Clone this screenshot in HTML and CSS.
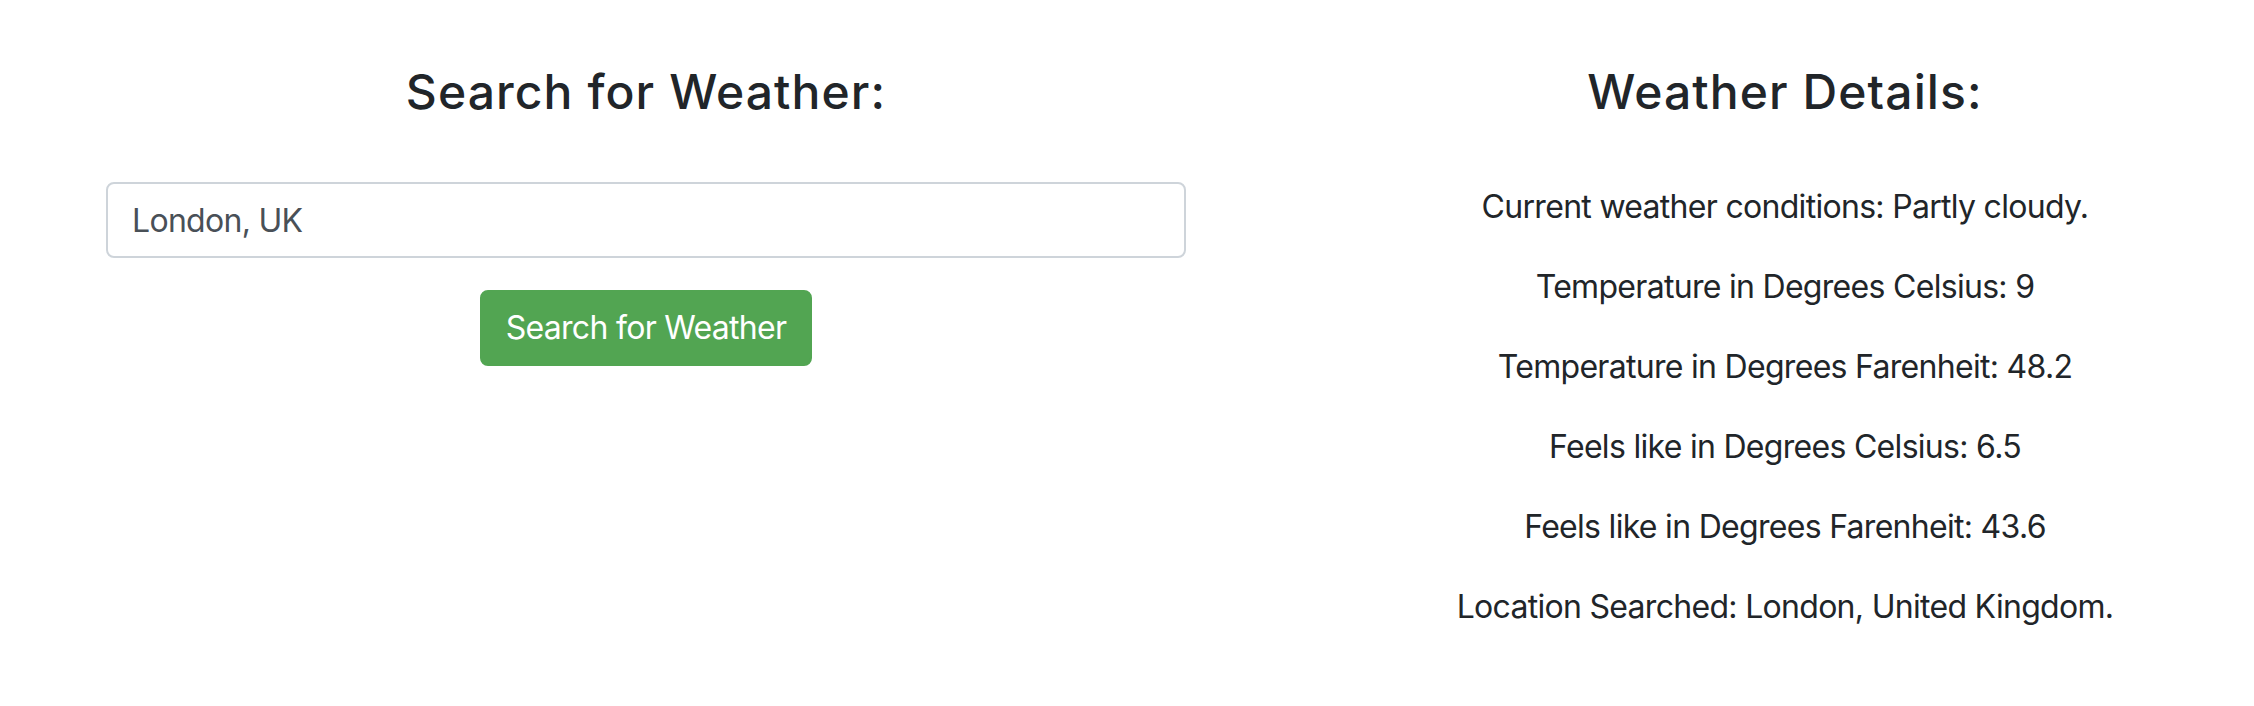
FILE: index.html
```html
<!DOCTYPE html>
<html lang="en">
<head>
<meta charset="utf-8">
<title>Weather</title>
<link rel="stylesheet" href="styles.css">
</head>
<body>
<main class="page">
  <section class="search">
    <h2 class="title">Search for Weather:</h2>
    <input class="field" type="text" value="London, UK">
    <button class="btn" type="button">Search for Weather</button>
  </section>
  <section class="details">
    <h2 class="title">Weather Details:</h2>
    <p class="line">Current weather conditions: Partly cloudy.</p>
    <p class="line">Temperature in Degrees Celsius: 9</p>
    <p class="line">Temperature in Degrees Farenheit: 48.2</p>
    <p class="line">Feels like in Degrees Celsius: 6.5</p>
    <p class="line">Feels like in Degrees Farenheit: 43.6</p>
    <p class="line">Location Searched: London, United Kingdom.</p>
  </section>
</main>
</body>
</html>
```

FILE: styles.css
```css
html, body {
  margin: 0;
  padding: 0;
  background: #ffffff;
}
body {
  font-family: Inter, "Liberation Sans", sans-serif;
  color: #212529;
  font-size: 32px;
  line-height: 48px;
  letter-spacing: -0.7px;
}
.page {
  display: grid;
  grid-template-columns: 1080px 938px;
  column-gap: 130px;
  padding-left: 106px;
}
.search, .details {
  display: flex;
  flex-direction: column;
  align-items: center;
  text-align: center;
}
.title {
  margin: 63px 0 61px;
  font-size: 48px;
  line-height: 58px;
  font-weight: 500;
  letter-spacing: 1.1px;
}
.field {
  box-sizing: border-box;
  width: 100%;
  height: 76px;
  padding: 12px 24px;
  font-family: inherit;
  font-size: 32px;
  letter-spacing: -0.7px;
  color: #495057;
  border: 2px solid #ced4da;
  border-radius: 8px;
  background: #fff;
  outline: none;
}
.btn {
  box-sizing: border-box;
  margin-top: 32px;
  height: 76px;
  padding: 12px 24px;
  font-family: inherit;
  font-size: 32px;
  line-height: 48px;
  letter-spacing: -0.7px;
  color: #fff;
  background: #52a552;
  border: 2px solid #52a552;
  border-radius: 8px;
}
.line {
  margin: 0 0 31px;
  padding-top: 1px;
}
```
